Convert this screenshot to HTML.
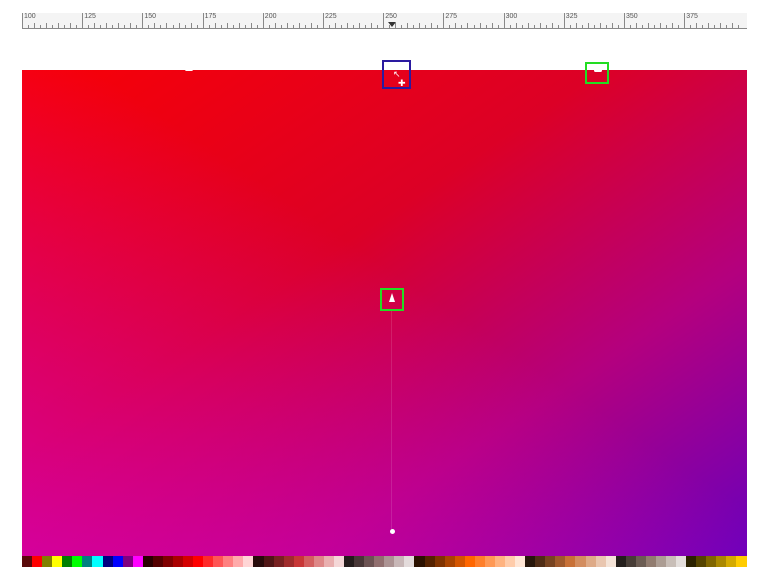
<!DOCTYPE html>
<html><head><style>
body{margin:0;width:768px;height:578px;background:#fff;position:relative;overflow:hidden;font-family:"Liberation Sans",sans-serif}
#ruler{position:absolute;left:22px;top:13px;width:725px;height:15px;background:#f4f4f4;border-bottom:1px solid #888}
#ruler span{position:absolute;top:0;font-size:7px;color:#555}
#canvas{position:absolute;left:22px;top:70px;width:725px;height:486px;
background:linear-gradient(to top right,rgba(215,0,185,0.75),rgba(215,0,185,0) 55%),linear-gradient(to bottom right,#f80006,#dc0026 40%,#b4007e 70%,#6a00bc)}
#dash{position:absolute;left:22px;top:69px;width:725px;border-top:1px dashed #fff}
.box{position:absolute;box-sizing:border-box}
#pal{position:absolute;left:22px;top:556px;width:725px;height:11px;display:flex}
#pal i{flex:1}
</style></head><body>
<div id="ruler"></div>
<div id="canvas"></div>
<div id="dash"></div>
<div class="box" style="left:382px;top:60px;width:29px;height:29px;border:2px solid #2a1aa0"></div>
<div class="box" style="left:585px;top:62px;width:24px;height:22px;border:2px solid #22dd22"></div>
<div class="box" style="left:380px;top:288px;width:24px;height:23px;border:2px solid #22dd22"></div>
<div style="position:absolute;left:389px;top:293px;width:0;height:0;border-left:3px solid transparent;border-right:3px solid transparent;border-bottom:9px solid #fff"></div>
<div style="position:absolute;left:390px;top:529px;width:5px;height:5px;border-radius:50%;background:#fff"></div>
<div style="position:absolute;left:391px;top:311px;width:1px;height:218px;background:rgba(255,255,255,0.12)"></div>
<div style="position:absolute;left:185px;top:68px;width:8px;height:3px;background:#fff;border-radius:2px"></div>
<div style="position:absolute;left:594px;top:69px;width:8px;height:3px;background:#fff;border-radius:2px"></div>
<div style="position:absolute;left:393px;top:70px;color:#fff;font-size:9px;line-height:9px">↖<br>&nbsp;&nbsp;✚</div>
<div id="pal"></div>
<script>
var r=document.getElementById('ruler'),h='';
var s=60.2/10;
for(var i=0;i<=119;i++){var x=i*s;var big=i%10==0,mid=i%2==0;
 h+='<div style="position:absolute;left:'+x+'px;bottom:0;width:1px;height:'+(big?15:(mid?5:3))+'px;background:#888"></div>';
 if(big)h+='<span style="left:'+(x+2)+'px">'+(100+i/10*25)+'</span>';}
h+='<div style="position:absolute;left:366px;top:9px;border-left:4px solid transparent;border-right:4px solid transparent;border-top:5px solid #333"></div>';
r.innerHTML=h;
var c="5a0a0a ff0000 808000 ffff00 008000 00ff00 008080 00ffff 000080 0000ff 800080 ff00ff 2a0000 550000 800000 aa0000 d40000 ff0000 ff2a2a ff5555 ff8080 ffaaaa ffd5d5 280b0b 501616 782121 a02c2c c83737 d35f5f de8787 e9afaf f4d7d7 241c1c 483737 6c5353 916f6f ac9393 c8b7b7 e3dbdb 2b1100 552200 803300 aa4400 d45500 ff6600 ff7f2a ff9955 ffb380 ffccaa ffe6d5 28170b 502d16 784421 a05a2c c87137 d38d5f deaa87 e9c6af f4e3d7 241f1c 483e37 6c5d53 917c6f ac9d93 c8beb7 e3dedb 2b2200 554400 806600 aa8800 d4aa00 ffcc00".split(' ');
document.getElementById('pal').innerHTML=c.map(function(k){return '<i style="background:#'+k+'"></i>'}).join('');
</script>
</body></html>
